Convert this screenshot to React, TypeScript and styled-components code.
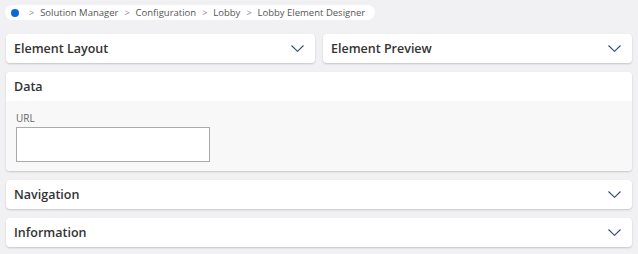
import styled, { createGlobalStyle } from 'styled-components'

const GlobalStyle = createGlobalStyle`
  html, body {
    margin: 0;
    padding: 0;
    background: #f1f0f2;
    font-family: "Open Sans", "Noto Sans", sans-serif;
    color: #222;
  }
`

const Page = styled.div`
  width: 638px;
  height: 254px;
  box-sizing: border-box;
  padding: 5px 6px 0 6px;
  display: flex;
  flex-direction: column;
  gap: 9px;
`

const Crumbs = styled.div`
  align-self: flex-start;
  margin-left: -1px;
  height: 15px;
  padding: 0 10px 0 6px;
  background: #fff;
  border-radius: 8px;
  display: flex;
  align-items: center;
  gap: 6px;
  font-size: 9.5px;
  color: #555;
  margin-bottom: 5px;
`

const Dot = styled.span`
  width: 8px;
  height: 8px;
  border-radius: 50%;
  background: #0a6ad8;
  margin-right: 4px;
`

const Sep = styled.span`
  color: #888;
  font-size: 9px;
`

const Row = styled.div`
  display: flex;
  gap: 8px;
`

const Card = styled.div<{ $grow?: boolean }>`
  flex: ${p => (p.$grow ? '1 1 0' : 'none')};
  background: #fff;
  border-radius: 4px;
  box-shadow: 0 1px 2px rgba(0, 0, 0, 0.18);
  overflow: hidden;
`

const Header = styled.div`
  height: 29px;
  display: flex;
  align-items: center;
  justify-content: space-between;
  padding: 0 11px 0 8px;
  font-size: 12.5px;
  font-weight: 600;
  color: #333;
`

const Body = styled.div`
  background: #f8f8f8;
  padding: 10px 10px 8px 10px;
  height: 70px;
  box-sizing: border-box;
`

const Label = styled.div`
  font-size: 10px;
  color: #666;
  margin-bottom: 2px;
`

const Input = styled.div`
  width: 194px;
  height: 35px;
  box-sizing: border-box;
  border: 1px solid #aaa;
  background: #fff;
`

const Chevron = () => (
  <svg width="13" height="7" viewBox="0 0 13 7">
    <path d="M0.5 0.5 L6.5 6.3 L12.5 0.5" fill="none" stroke="#2b4a7a" strokeWidth="1.1" />
  </svg>
)

const App = () => (
  <>
    <GlobalStyle />
    <Page>
      <Crumbs>
        <Dot />
        <Sep>&gt;</Sep>
        <span>Solution Manager</span>
        <Sep>&gt;</Sep>
        <span>Configuration</span>
        <Sep>&gt;</Sep>
        <span>Lobby</span>
        <Sep>&gt;</Sep>
        <span>Lobby Element Designer</span>
      </Crumbs>
      <Row>
        <Card $grow>
          <Header>
            Element Layout
            <Chevron />
          </Header>
        </Card>
        <Card $grow>
          <Header>
            Element Preview
            <Chevron />
          </Header>
        </Card>
      </Row>
      <Card>
        <Header>Data</Header>
        <Body>
          <Label>URL</Label>
          <Input />
        </Body>
      </Card>
      <Card>
        <Header>
          Navigation
          <Chevron />
        </Header>
      </Card>
      <Card>
        <Header>
          Information
          <Chevron />
        </Header>
      </Card>
    </Page>
  </>
)

export default App
